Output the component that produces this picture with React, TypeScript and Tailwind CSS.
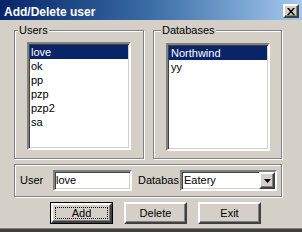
import React from 'react';

const users = ['love', 'ok', 'pp', 'pzp', 'pzp2', 'sa'];
const databases = ['Northwind', 'yy'];

const sunken =
    'border-2 border-t-[#808080] border-l-[#808080] border-b-white border-r-white shadow-[inset_1px_1px_0_#404040,inset_-1px_-1px_0_#d4d0c8]';
const raised =
    'border-2 border-t-white border-l-white border-b-[#404040] border-r-[#404040] shadow-[inset_-1px_-1px_0_#808080]';
const etched = 'border border-[#808080] shadow-[inset_1px_1px_0_#fff,1px_1px_0_#fff]';

const GroupBox = ({
    label,
    labelLeft,
    className,
    children,
}: {
    label?: string;
    labelLeft?: string;
    className: string;
    children: React.ReactNode;
}) => (
    <div className={`relative ${etched} ${className}`}>
        {label && (
            <span className={`absolute -top-[8px] ${labelLeft} bg-[#d4d0c8] px-[1px] leading-[14px]`}>
                {label}
            </span>
        )}
        {children}
    </div>
);

const ListBox = ({ items, selected, textPad }: { items: string[]; selected: number; textPad: string }) => (
    <div className={`w-[104px] h-[108px] bg-white ${sunken} p-[1px]`}>
        {items.map((item, i) => (
            <div
                key={item}
                className={`h-[14px] leading-[14px] ${textPad} ${
                    i === selected ? 'bg-[#0a246a] text-white' : 'text-black'
                }`}
            >
                {item}
            </div>
        ))}
    </div>
);

const Button = ({ label, focused }: { label: string; focused?: boolean }) =>
    focused ? (
        <div className="w-[63px] h-[22px] border border-black">
            <div className={`h-full ${raised} flex items-center justify-center p-[2px]`}>
                <div className="w-full h-full border border-dotted border-black flex items-center justify-center">
                    {label}
                </div>
            </div>
        </div>
    ) : (
        <div className={`w-[63px] h-[22px] ${raised} flex items-center justify-center`}>{label}</div>
    );

export default function App() {
    return (
        <div
            className="w-[302px] h-[232px] bg-[#d4d0c8] flex flex-col text-[11px] text-black overflow-hidden"
            style={{ fontFamily: '"Liberation Sans", Arial, sans-serif' }}
        >
            {/* title bar */}
            <div className="h-[20px] bg-gradient-to-r from-[#0a246a] via-[#3a6ea5] to-[#a6caf0] flex items-center justify-between pl-[4px] pr-[3px]">
                <span className="text-white font-bold text-[12px] pt-[3px]">Add/Delete user</span>
                <div className={`w-[16px] h-[14px] bg-[#d4d0c8] ${raised} flex items-center justify-center mt-[2px]`}>
                    <svg width="8" height="7" viewBox="0 0 8 7">
                        <path d="M0 0h2l2 2.5L6 0h2L5 3.5 8 7H6L4 4.5 2 7H0l3-3.5z" fill="black" />
                    </svg>
                </div>
            </div>

            <div className="flex flex-col pl-[14px] pr-[20px] pt-[10px]">
                <div className="flex gap-[9px]">
                    <GroupBox label="Users" labelLeft="left-[3px]" className="w-[130px] h-[129px] pl-[12px] pt-[11px]">
                        <ListBox items={users} selected={0} textPad="pl-[1px]" />
                    </GroupBox>
                    <GroupBox label="Databases" labelLeft="left-[7px]" className="w-[129px] h-[129px] pl-[12px] pt-[12px]">
                        <ListBox items={databases} selected={0} textPad="pl-[2px]" />
                    </GroupBox>
                </div>

                <GroupBox className="mt-[5px] h-[33px] flex items-center pl-[5px]">
                    <span className="w-[33px]">User</span>
                    <div className={`w-[79px] h-[21px] bg-white ${sunken} flex items-center pl-[1px]`}>love</div>
                    <span className="ml-[6px] w-[42px] overflow-hidden whitespace-nowrap">Databas</span>
                    <div className={`w-[97px] h-[21px] bg-white ${sunken} flex items-center justify-between pl-[2px] pr-[0px]`}>
                        <span>Eatery</span>
                        <div className={`w-[16px] h-[17px] bg-[#d4d0c8] ${raised} flex items-center justify-center`}>
                            <svg width="7" height="4" viewBox="0 0 7 4">
                                <path d="M0 0h7L3.5 4z" fill="black" />
                            </svg>
                        </div>
                    </div>
                </GroupBox>

                <div className="flex gap-[11px] pl-[36px] mt-[5px]">
                    <Button label="Add" focused />
                    <Button label="Delete" />
                    <Button label="Exit" />
                </div>
            </div>

            <div className="mt-auto h-[4px] bg-[#404040] border-t border-[#808080]" />
        </div>
    );
}
